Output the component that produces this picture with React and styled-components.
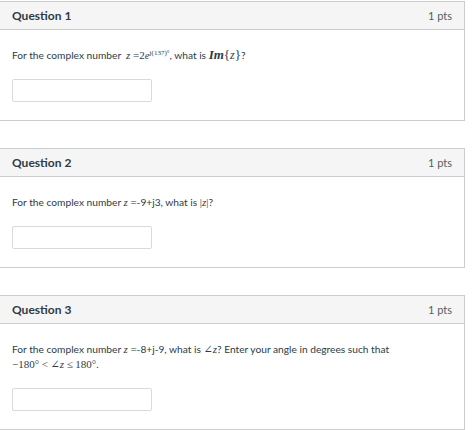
import React from 'react';
import styled, { createGlobalStyle } from 'styled-components';

const GlobalStyle = createGlobalStyle`
    html, body {
        margin: 0;
        padding: 0;
        background: #ffffff;
    }
    body {
        font-family: 'Lato', 'Liberation Sans', sans-serif;
        color: #2d3b45;
    }
`;

const Page = styled.div`
    padding-top: 1px;
    display: flex;
    flex-direction: column;
    gap: 27px;
`;

const Card = styled.div`
    box-sizing: border-box;
    width: 465px;
    border: 1px solid #c7cdd1;
    border-left: none;
    background: #ffffff;
`;

const CardHeader = styled.div`
    box-sizing: border-box;
    height: 28px;
    display: flex;
    align-items: center;
    justify-content: space-between;
    padding: 0 12px;
    background: #f5f5f5;
    border-bottom: 1px solid #c7cdd1;
`;

const Title = styled.div`
    font-size: 12px;
    font-weight: 700;
    color: #2d3b45;
`;

const Points = styled.div`
    font-size: 11px;
    color: #555e64;
`;

const CardBody = styled.div`
    padding: 18px 12px 18px;
`;

const Text = styled.div`
    font-size: 10.2px;
    line-height: 15px;
    height: ${(p) => p.$lines * 15}px;
    color: #2d3b45;
`;

const Math = styled.span`
    font-family: 'Liberation Serif', 'DejaVu Serif', serif;
    font-style: ${(p) => (p.$upright ? 'normal' : 'italic')};
    font-weight: ${(p) => (p.$bold ? 700 : 400)};
    font-size: ${(p) => p.$size || 11}px;
    line-height: 1;
`;

const Sup = styled.sup`
    font-family: 'Liberation Serif', 'DejaVu Serif', serif;
    font-size: 7px;
    line-height: 0;
`;

const Answer = styled.input`
    display: block;
    box-sizing: border-box;
    margin-top: 16px;
    width: 140px;
    height: 23px;
    border: 1px solid #d7dadd;
    border-radius: 2px;
    background: #ffffff;
    outline: none;
`;

function Question({ number, lines = 1, children }) {
    return (
        <Card>
            <CardHeader>
                <Title>Question {number}</Title>
                <Points>1 pts</Points>
            </CardHeader>
            <CardBody>
                <Text $lines={lines}>{children}</Text>
                <Answer type="text" />
            </CardBody>
        </Card>
    );
}

export default function App() {
    return (
        <>
            <GlobalStyle />
            <Page>
                <Question number={1}>
                    For the complex number&nbsp; <Math>z</Math> <Math $upright>=2</Math>
                    <Math>e</Math>
                    <Sup>j(137)°</Sup>, what is <Math $bold $size={13}>Im</Math>
                    <Math $upright $size={13}>{'{'}</Math>
                    <Math $size={12}>z</Math>
                    <Math $upright $size={13}>{'}'}</Math>?
                </Question>
                <Question number={2}>
                    For the complex number <Math>z</Math> <Math $upright>=</Math>-9+j3, what is{' '}
                    <Math $upright>|</Math>
                    <Math>z</Math>
                    <Math $upright>|</Math>?
                </Question>
                <Question number={3} lines={2}>
                    For the complex number <Math>z</Math> <Math $upright>=</Math>-8+j-9, what is{' '}
                    <Math $upright>∠</Math>
                    <Math>z</Math>? Enter your angle in degrees such that
                    <br />
                    <Math $upright>−180°</Math> <Math $upright>&lt;</Math> <Math $upright>∠</Math>
                    <Math>z</Math> <Math $upright>≤</Math> <Math $upright>180°</Math>.
                </Question>
            </Page>
        </>
    );
}
